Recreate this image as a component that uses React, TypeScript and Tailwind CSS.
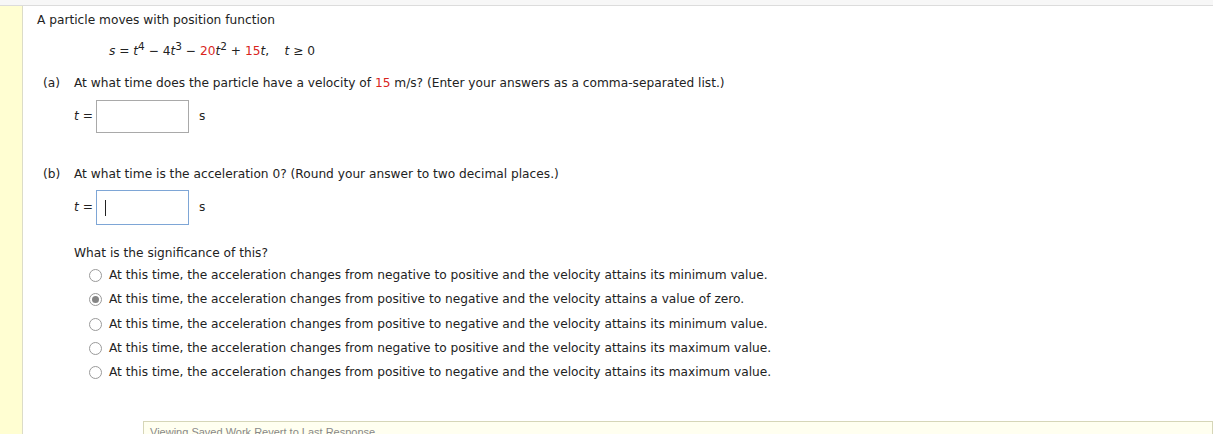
import React from "react";

const red = "text-[#d9241c]";

function Radio({ checked }: { checked?: boolean }) {
  return (
    <span className="relative inline-flex h-[13px] w-[13px] shrink-0 items-center justify-center rounded-full border border-[#9a9a9a] bg-white">
      {checked && <span className="h-[7px] w-[7px] rounded-full bg-[#858585]" />}
    </span>
  );
}

function Answer({ focused }: { focused?: boolean }) {
  return (
    <div className="flex items-center">
      <span className="w-[23px] pl-[1px] italic">t =</span>
      <div
        className={
          "flex w-[93px] items-center border pl-[8px] " +
          (focused ? "h-[35px] border-[#7ea6d6]" : "h-[33px] border-[#a9a9a9]")
        }
      >
        {focused && <span className="h-[16px] w-[1px] bg-[#222]" />}
      </div>
      <span className="ml-[10px]">s</span>
    </div>
  );
}

const options = [
  "At this time, the acceleration changes from negative to positive and the velocity attains its minimum value.",
  "At this time, the acceleration changes from positive to negative and the velocity attains a value of zero.",
  "At this time, the acceleration changes from positive to negative and the velocity attains its minimum value.",
  "At this time, the acceleration changes from negative to positive and the velocity attains its maximum value.",
  "At this time, the acceleration changes from positive to negative and the velocity attains its maximum value.",
];

export default function App() {
  return (
    <div
      className="flex h-[434px] w-[1213px] flex-col overflow-hidden bg-white text-[12.2px] text-[#222]"
      style={{ fontFamily: '"DejaVu Sans", Verdana, sans-serif' }}
    >
      <div className="h-[6px] shrink-0 border-b border-[#dcdcdc] bg-[#f7f7f7]" />
      <div className="flex flex-1">
        <div className="w-[23px] shrink-0 border-r border-[#dcdcc8] bg-[#fffed2]" />
        <div className="flex flex-1 flex-col pl-[14px] pt-[7px]">
          <div className="leading-[15px]">A particle moves with position function</div>
          <div className="mt-[16px] pl-[72px] leading-[15px]">
            <i>s</i> = <i>t</i>
            <sup className="text-[10.5px]">4</sup> − 4<i>t</i>
            <sup className="text-[10.5px]">3</sup> − <span className={red}>20</span>
            <i>t</i>
            <sup className="text-[10.5px]">2</sup> + <span className={red}>15</span>
            <i>t</i>,&nbsp;&nbsp;&nbsp; <i>t</i> ≥ 0
          </div>

          <div className="mt-[17px] flex leading-[15px]">
            <span className="w-[37px] pl-[6px]">(a)</span>
            <span>
              At what time does the particle have a velocity of <span className={red}>15</span> m/s?
              (Enter your answers as a comma-separated list.)
            </span>
          </div>
          <div className="mt-[9px] pl-[36px]">
            <Answer />
          </div>

          <div className="mt-[34px] flex leading-[15px]">
            <span className="w-[37px] pl-[6px]">(b)</span>
            <span>At what time is the acceleration 0? (Round your answer to two decimal places.)</span>
          </div>
          <div className="mt-[8px] pl-[36px]">
            <Answer focused />
          </div>

          <div className="mt-[21px] pl-[37px] leading-[15px]">What is the significance of this?</div>
          <div className="mt-[7px] flex flex-col gap-[9.3px] pl-[52px]">
            {options.map((o, i) => (
              <div key={i} className="flex items-center gap-[7px] leading-[15px]">
                <Radio checked={i === 1} />
                <span>{o}</span>
              </div>
            ))}
          </div>

          <div className="mt-[41px] ml-[106px] h-[30px] border border-[#d6d6b8] bg-[#fffff0] pl-[6px] pt-[2px] text-[11px] text-[#888]" style={{ fontFamily: '"Liberation Sans", Arial, sans-serif' }}>
            Viewing Saved Work Revert to Last Response
          </div>
        </div>
      </div>
    </div>
  );
}
